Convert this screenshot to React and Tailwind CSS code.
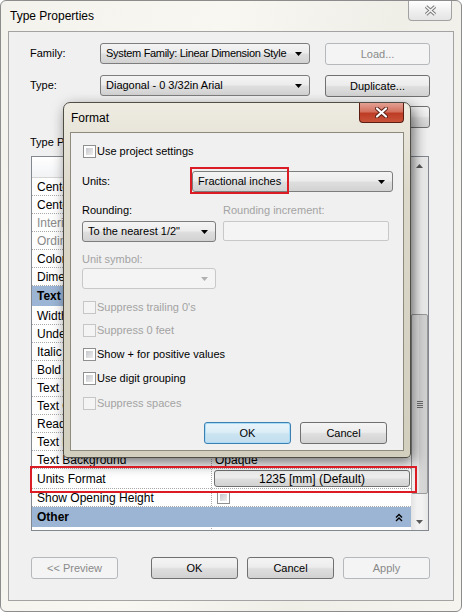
import React from 'react';

// Win7-style button face
const face = 'bg-[linear-gradient(to_bottom,#f4f4f4_0%,#ececec_46%,#dedede_54%,#d2d2d2_100%)]';

const rows = [
  { n: 'Center Marks', check: true },
  { n: 'Center Mark Size', v: '1/8"' },
  { n: 'Interior Tick Mark', v: 'Diagonal 3/32"', dim: true },
  { n: 'Ordinate Dimension Settings', v: 'Edit...', dim: true },
  { n: 'Color', v: 'Black' },
  { n: 'Dimension Line Snap Distance', v: '1/4"' },
  { group: 'Text' },
  { n: 'Width Factor', v: '1.000000' },
  { n: 'Underline', check: true },
  { n: 'Italic', check: true },
  { n: 'Bold', check: true },
  { n: 'Text Size', v: '3/32"' },
  { n: 'Text Offset', v: '1/16"' },
  { n: 'Read Convention', v: 'Up, then Left' },
  { n: 'Text Font', v: 'Arial' },
  { n: 'Text Background', v: 'Opaque' },
  { n: 'Units Format', button: '1235 [mm] (Default)' },
  { n: 'Show Opening Height', check: true },
  { group: 'Other', chevron: true },
  { n: 'Alternate Units', v: 'None' },
];

function Arrow({ color = '#000' }) {
  return (
    <svg width="7" height="4" viewBox="0 0 7 4" className="shrink-0">
      <path d="M0 0h7L3.5 4z" fill={color} />
    </svg>
  );
}

function Combo({ text, className = '', disabled }) {
  return (
    <div
      className={`flex h-[21px] items-center rounded-[3px] border ${
        disabled ? 'border-[#c8c8c8] bg-[#f4f4f4]' : `border-[#7d7d7d] ${face}`
      } ${className}`}
    >
      <span className="flex-1 overflow-hidden whitespace-nowrap pl-[5px]">{text}</span>
      <span className="mr-[7px] flex">
        <Arrow color={disabled ? '#b0b0b0' : '#000'} />
      </span>
    </div>
  );
}

function Btn({ children, className = '', disabled, primary }) {
  let look = `border-[#707070] ${face}`;
  if (disabled) look = 'border-[#b5b9bc] bg-[#f4f4f4] text-[#8a8a8a]';
  if (primary)
    look =
      'border-[#3c7fb1] bg-[linear-gradient(to_bottom,#e9f4fb_0%,#dcedf7_46%,#cce4f2_54%,#c2ddee_100%)] shadow-[inset_0_0_0_1px_#a8dcf7]';
  return (
    <div
      className={`flex h-[22px] items-center justify-center rounded-[3px] border ${look} ${className}`}
    >
      {children}
    </div>
  );
}

function Check({ disabled }) {
  return (
    <span
      className={`flex h-[13px] w-[13px] shrink-0 border p-[2px] ${
        disabled ? 'border-[#c6c6c6] bg-[#f4f4f4]' : 'border-[#8e8f8f] bg-white'
      }`}
    >
      <span
        className={`h-full w-full ${
          disabled ? 'bg-[#f4f4f4]' : 'bg-[linear-gradient(135deg,#c4c7cb,#eeeeee)]'
        }`}
      />
    </span>
  );
}

function CheckLine({ label, disabled, className = '' }) {
  return (
    <div className={`flex h-[14px] items-center pl-[12px] ${className}`}>
      <Check disabled={disabled} />
      <span className={`ml-[1px] ${disabled ? 'text-[#a3a3a3]' : ''}`}>{label}</span>
    </div>
  );
}

function PropRow({ row }) {
  if (row.group) {
    return (
      <div className="flex h-[21px] shrink-0 items-center justify-between border-b border-white bg-[#9cb5d5] pl-[5px] pr-[8px] font-bold">
        <span>{row.group}</span>
        {row.chevron && (
          <svg width="8" height="9" viewBox="0 0 8 9">
            <path d="M1 4.5L4 1.5L7 4.5M1 8L4 5L7 8" fill="none" stroke="#000" strokeWidth="1.4" />
          </svg>
        )}
      </div>
    );
  }
  return (
    <div
      className={`flex shrink-0 border-b border-dotted border-[#a9a9a9] ${
        row.button ? 'h-[20px]' : 'h-[18px]'
      }`}
    >
      <div
        className={`flex w-[180px] shrink-0 items-center whitespace-nowrap border-r border-dotted border-[#a9a9a9] pl-[5px] ${
          row.dim ? 'text-[#8a8a8a]' : ''
        }`}
      >
        {row.n}
      </div>
      <div className="flex flex-1 items-center whitespace-nowrap pl-[3px]">
        {row.button && (
          <div
            className={`ml-[-1px] mr-[1px] flex h-[17px] flex-1 items-center justify-center rounded-[3px] border border-[#707070] ${face}`}
          >
            {row.button}
          </div>
        )}
        {row.check && (
          <span className="ml-[2px]">
            <Check />
          </span>
        )}
        {row.v && <span className={row.dim ? 'text-[#8a8a8a]' : ''}>{row.v}</span>}
      </div>
    </div>
  );
}

function ScrollBar() {
  return (
    <div className="flex w-[17px] shrink-0 flex-col bg-[linear-gradient(to_right,#e3e3e3,#f2f2f2_35%,#f2f2f2_65%,#e6e6e6)]">
      <div className="flex h-[17px] items-center justify-center">
        <svg width="7" height="4" viewBox="0 0 7 4">
          <path d="M0 4h7L3.5 0z" fill="#5a5a5a" />
        </svg>
      </div>
      <div className="h-[140px]" />
      <div className="flex h-[180px] items-center justify-center rounded-[2px] border border-[#9a9a9a] bg-[linear-gradient(to_right,#f3f3f3,#e6e6e6_50%,#d8d8d8_50%,#d2d2d2)]">
        <div className="flex w-[6px] flex-col gap-[1px]">
          <span className="h-[1px] bg-[#6f6f6f]" />
          <span className="h-[1px] bg-[#6f6f6f]" />
          <span className="h-[1px] bg-[#6f6f6f]" />
          <span className="h-[1px] bg-[#6f6f6f]" />
        </div>
      </div>
      <div className="flex-1" />
      <div className="flex h-[17px] items-center justify-center">
        <Arrow color="#5a5a5a" />
      </div>
    </div>
  );
}

function FormatDialog() {
  return (
    <div className="absolute left-[62px] top-[101px] flex h-[356px] w-[348px] flex-col rounded-t-[7px] rounded-b-[4px] border border-[#4f4d46] bg-[linear-gradient(to_bottom,#eeebe2,#dcd8ca_25%,#d3cfbf)] shadow-[3px_5px_14px_rgba(0,0,0,0.55)]">
      {/* title bar */}
      <div className="flex h-[29px] shrink-0 items-start justify-between pr-[6px]">
        <span className="self-center pl-[7px] text-[12px]">Format</span>
        <div className="flex h-[20px] w-[45px] items-center justify-center rounded-b-[4px] border border-t-0 border-[#5b1d12] bg-[linear-gradient(to_bottom,#e3a193_0%,#d4725f_45%,#be3c25_55%,#c9533a_100%)]">
          <svg width="13" height="11" viewBox="0 0 13 11">
            <path d="M2 1.5L11 9.5M11 1.5L2 9.5" stroke="#5a2117" strokeWidth="4" strokeLinecap="round" />
            <path d="M2 1.5L11 9.5M11 1.5L2 9.5" stroke="#fff" strokeWidth="2.2" strokeLinecap="round" />
          </svg>
        </div>
      </div>

      {/* client area */}
      <div className="mx-[6px] flex h-[319px] flex-col border border-[#8f8b7c] bg-[#f0f0f0]">
        <CheckLine label="Use project settings" className="mt-[11px]" />

        <div className="mt-[13px] flex h-[21px] items-center pl-[11px]">
          <span className="w-[110px]">Units:</span>
          <Combo text="Fractional inches" className="w-[201px]" />
        </div>

        <div className="mt-[11px] flex h-[14px] items-center pl-[11px]">
          <span className="w-[141px]">Rounding:</span>
          <span className="text-[#a3a3a3]">Rounding increment:</span>
        </div>
        <div className="mt-[4px] flex items-start pl-[11px]">
          <Combo text={'To the nearest 1/2"'} className="w-[134px]" />
          <div className="ml-[7px] h-[20px] w-[166px] rounded-[2px] border border-[#c8c8c8] bg-[#f4f4f4]" />
        </div>

        <div className="mt-[10px] flex h-[14px] items-center pl-[11px] text-[#a3a3a3]">
          Unit symbol:
        </div>
        <div className="mt-[2px] pl-[11px]">
          <Combo text="" disabled className="w-[134px]" />
        </div>

        <CheckLine label="Suppress trailing 0's" disabled className="mt-[11px]" />
        <CheckLine label="Suppress 0 feet" disabled className="mt-[9px]" />
        <CheckLine label="Show + for positive values" className="mt-[10px]" />
        <CheckLine label="Use digit grouping" className="mt-[10px]" />
        <CheckLine label="Suppress spaces" disabled className="mt-[11px]" />

        <div className="mt-[12px] flex gap-[9px] pl-[133px]">
          <Btn primary className="w-[87px]">OK</Btn>
          <Btn className="w-[87px]">Cancel</Btn>
        </div>
      </div>
    </div>
  );
}

export default function App() {
  return (
    <div className="relative flex h-[612px] w-[462px] flex-col overflow-hidden rounded-[6px] border border-[#8c8c8c] bg-[linear-gradient(100deg,#f3f2ec,#f8f7f2_40%,#efeee7_70%,#f5f4ef)] font-['Liberation_Sans',Arial,sans-serif] text-[11px] text-black">
      {/* window title bar */}
      <div className="flex h-[30px] shrink-0 items-start justify-between pr-[9px]">
        <span className="self-center pl-[9px] text-[12px]">Type Properties</span>
        <div className="flex h-[20px] w-[44px] items-center justify-center rounded-b-[4px] border border-t-0 border-[#a2a2a2] bg-[linear-gradient(to_bottom,#ffffff,#f0f0f0_50%,#e4e4e4)]">
          <svg width="13" height="11" viewBox="0 0 13 11">
            <path d="M2 1.5L11 9.5M11 1.5L2 9.5" stroke="#7a7a7a" strokeWidth="3.6" />
            <path d="M2 1.5L11 9.5M11 1.5L2 9.5" stroke="#f6f6f6" strokeWidth="1.6" />
          </svg>
        </div>
      </div>

      {/* main panel */}
      <div className="mx-[7px] flex h-[570px] shrink-0 flex-col border border-[#a3a3a3] bg-[#f0f0f0] pl-[21px] pt-[11px]">
        <div className="flex h-[22px] items-start">
          <span className="flex h-[21px] w-[70px] items-center">Family:</span>
          <Combo
            text="System Family: Linear Dimension Style"
            className="w-[210px] tracking-[-0.3px]"
          />
          <Btn disabled className="ml-[15px] w-[105px]">Load...</Btn>
        </div>
        <div className="mt-[10px] flex h-[22px] items-start">
          <span className="flex h-[21px] w-[70px] items-center">Type:</span>
          <Combo text="Diagonal - 0 3/32in Arial" className="w-[210px]" />
          <Btn className="ml-[15px] w-[105px]">Duplicate...</Btn>
        </div>
        <div className="mt-[9px] flex h-[22px]">
          <Btn className="ml-[295px] w-[105px]">Rename...</Btn>
        </div>

        <div className="mt-[7px] flex h-[14px] items-center">Type Parameters</div>

        {/* parameter grid */}
        <div className="ml-[1px] mt-[7px] flex h-[375px] w-[398px] border border-[#828790] bg-white text-[12px]">
          <div className="flex flex-1 flex-col overflow-hidden">
            <div className="flex h-[21px] shrink-0 border-b border-[#d5d5d5] bg-[linear-gradient(to_bottom,#ffffff,#f2f3f5)]">
              <div className="flex w-[180px] items-center justify-center border-r border-[#d5d5d5]">Parameter</div>
              <div className="flex flex-1 items-center justify-center">Value</div>
            </div>
            {rows.map((r, i) => (
              <PropRow key={i} row={r} />
            ))}
          </div>
          <ScrollBar />
        </div>

        <div className="ml-[1px] mt-[26px] flex">
          <Btn disabled className="w-[87px]">&lt;&lt; Preview</Btn>
          <Btn className="ml-[33px] w-[87px]">OK</Btn>
          <Btn className="ml-[9px] w-[87px]">Cancel</Btn>
          <Btn disabled className="ml-[9px] w-[87px]">Apply</Btn>
        </div>
      </div>

      <FormatDialog />

      {/* red callouts */}
      <div className="absolute left-[189px] top-[166px] h-[27px] w-[99px] border-2 border-[#dc1c24]" />
      <div className="absolute left-[29px] top-[465px] h-[27px] w-[387px] border-2 border-[#dc1c24]" />
    </div>
  );
}
